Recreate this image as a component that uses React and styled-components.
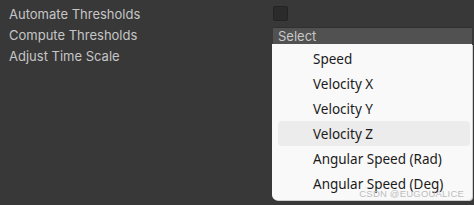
import React from "react";
import styled, { createGlobalStyle } from "styled-components";

const Global = createGlobalStyle`
  html, body { margin: 0; padding: 0; background: #383838; }
  body { width: 474px; height: 205px; overflow: hidden; }
`;

const Page = styled.div`
  position: relative;
  width: 474px;
  height: 205px;
  background: #383838;
  font-family: Inter, "Noto Sans", sans-serif;
`;

const Inspector = styled.div`
  display: grid;
  grid-template-columns: 273px 1fr;
  grid-auto-rows: 21px;
  padding: 3px 2px 0 0;
`;

const Label = styled.div`
  display: flex;
  align-items: center;
  padding-left: 9px;
  font-size: 13px;
  color: #c6c6c6;
  white-space: nowrap;
`;

const Field = styled.div`
  display: flex;
  align-items: center;
`;

const Checkbox = styled.div`
  width: 13px;
  height: 13px;
  background: #2b2b2b;
  border: 1px solid #232323;
  border-radius: 2px;
`;

const SelectBar = styled.div`
  flex: 1;
  height: 17px;
  margin-top: 2px;
  background: #515151;
  border-top: 1px solid #303030;
  display: flex;
  align-items: center;
  padding-left: 5px;
  font-size: 13px;
  color: #c8c8c8;
  box-sizing: border-box;
`;

const Menu = styled.div`
  position: absolute;
  left: 272px;
  top: 44px;
  width: 200px;
  height: 156px;
  box-sizing: border-box;
  background: #f9f9f9;
  border-radius: 0 0 4px 5px;
  box-shadow: 1px 1px 0 #cfcfcf;
  padding-top: 2px;
  display: flex;
  flex-direction: column;
  font-family: "Noto Sans", "Open Sans", sans-serif;
`;

const Item = styled.div`
  height: 25px;
  margin: 0 2px 0 6px;
  padding-left: 35px;
  display: flex;
  align-items: center;
  font-size: 13.5px;
  color: #1b1b1b;
  border-radius: 4px;
  background: ${(p) => (p.$active ? "#ececec" : "transparent")};
  white-space: nowrap;
`;

const Watermark = styled.div`
  position: absolute;
  right: 10px;
  top: 188px;
  font-family: "Liberation Sans", Arial, sans-serif;
  font-size: 9.5px;
  line-height: 11px;
  color: #bdbdbd;
  letter-spacing: 0.2px;
`;

const items = [
  "Speed",
  "Velocity X",
  "Velocity Y",
  "Velocity Z",
  "Angular Speed (Rad)",
  "Angular Speed (Deg)",
];

export default function App() {
  return (
    <Page>
      <Global />
      <Inspector>
        <Label>Automate Thresholds</Label>
        <Field>
          <Checkbox />
        </Field>
        <Label>Compute Thresholds</Label>
        <Field>
          <SelectBar>Select</SelectBar>
        </Field>
        <Label>Adjust Time Scale</Label>
        <Field />
      </Inspector>
      <Menu>
        {items.map((t) => (
          <Item key={t} $active={t === "Velocity Z"}>
            {t}
          </Item>
        ))}
      </Menu>
      <Watermark>CSDN @EUGOUALICE</Watermark>
    </Page>
  );
}
